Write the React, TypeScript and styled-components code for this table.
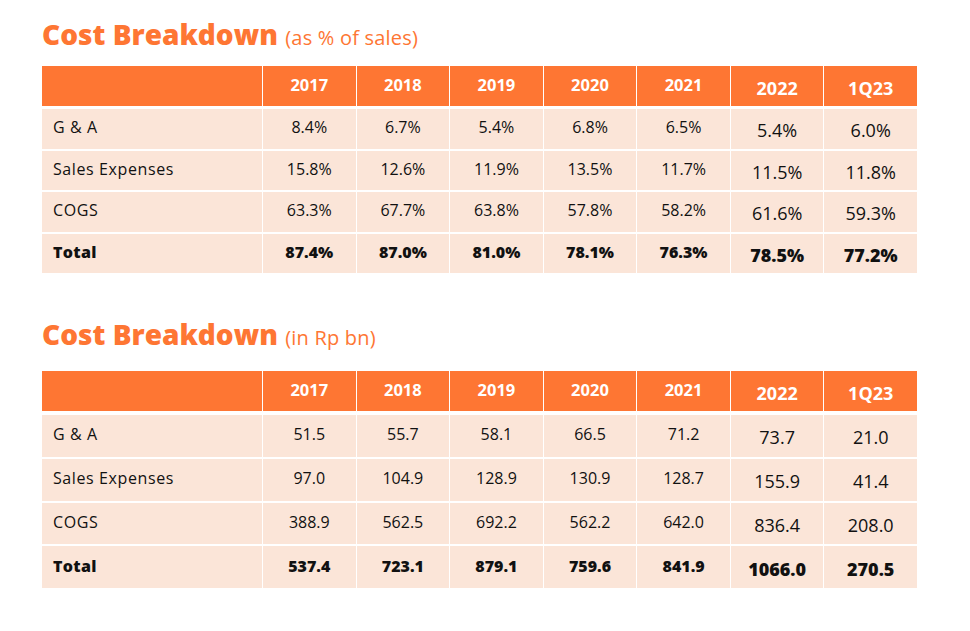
import React from "react";
import styled, { createGlobalStyle } from "styled-components";

const GlobalStyle = createGlobalStyle`
  body {
    margin: 0;
    background: #ffffff;
    font-family: "Open Sans", "Liberation Sans", sans-serif;
  }
`;

const years = ["2017", "2018", "2019", "2020", "2021", "2022", "1Q23"];

// 마지막 두 열(2022, 1Q23)은 원본에서 글자가 조금 더 큼
const bigCols = [5, 6];

const percentRows = [
  { label: "G & A", values: ["8.4%", "6.7%", "5.4%", "6.8%", "6.5%", "5.4%", "6.0%"] },
  { label: "Sales Expenses", values: ["15.8%", "12.6%", "11.9%", "13.5%", "11.7%", "11.5%", "11.8%"] },
  { label: "COGS", values: ["63.3%", "67.7%", "63.8%", "57.8%", "58.2%", "61.6%", "59.3%"] },
  { label: "Total", values: ["87.4%", "87.0%", "81.0%", "78.1%", "76.3%", "78.5%", "77.2%"], total: true },
];

const amountRows = [
  { label: "G & A", values: ["51.5", "55.7", "58.1", "66.5", "71.2", "73.7", "21.0"] },
  { label: "Sales Expenses", values: ["97.0", "104.9", "128.9", "130.9", "128.7", "155.9", "41.4"] },
  { label: "COGS", values: ["388.9", "562.5", "692.2", "562.2", "642.0", "836.4", "208.0"] },
  { label: "Total", values: ["537.4", "723.1", "879.1", "759.6", "841.9", "1066.0", "270.5"], total: true },
];

type Row = { label: string; values: string[]; total?: boolean };

const CostTable = ({
  title,
  unit,
  rows,
  rowHeight,
  headGap,
  titleGap,
}: {
  title: string;
  unit: string;
  rows: Row[];
  rowHeight: number;
  headGap: number;
  titleGap: number;
}) => (
  <Section $gap={titleGap}>
    <Title>
      {title} <Unit>{unit}</Unit>
    </Title>
    <Grid>
      <HeadRow $gap={headGap}>
        <HeadCell />
        {years.map((y, i) => (
          <HeadCell key={y} $big={bigCols.includes(i)}>
            {y}
          </HeadCell>
        ))}
      </HeadRow>
      {rows.map((r) => (
        <BodyRow key={r.label} $h={rowHeight}>
          <LabelCell $bold={r.total}>{r.label}</LabelCell>
          {r.values.map((v, i) => (
            <ValueCell key={i} $bold={r.total} $big={bigCols.includes(i)}>
              {v}
            </ValueCell>
          ))}
        </BodyRow>
      ))}
    </Grid>
  </Section>
);

export default function App() {
  return (
    <>
      <GlobalStyle />
      <Page>
        <CostTable
          title="Cost Breakdown"
          unit="(as % of sales)"
          rows={percentRows}
          rowHeight={39.5}
          headGap={3}
          titleGap={9}
        />
        <CostTable
          title="Cost Breakdown"
          unit="(in Rp bn)"
          rows={amountRows}
          rowHeight={41.75}
          headGap={4}
          titleGap={14}
        />
      </Page>
    </>
  );
}

const Page = styled.div`
  width: 970px;
  height: 631px;
  padding: 15px 53px 0 42px;
  box-sizing: border-box;
  display: flex;
  flex-direction: column;
  gap: 42px;
`;

const Section = styled.section<{ $gap: number }>`
  display: flex;
  flex-direction: column;
  gap: ${(p) => p.$gap}px;
`;

const Title = styled.h2`
  margin: 0;
  color: #fe7633;
  font-family: "Open Sans", sans-serif;
  font-size: 28px;
  font-weight: 800;
  letter-spacing: 0;
  line-height: 38px;
  white-space: nowrap;
`;

const Unit = styled.span`
  font-size: 20px;
  font-weight: 400;
  letter-spacing: 0.2px;
`;

const Grid = styled.div`
  display: flex;
  flex-direction: column;
  gap: 2px;
`;

const RowBase = styled.div`
  display: grid;
  grid-template-columns: 220px repeat(7, 1fr);
  column-gap: 1px;
`;

const HeadRow = styled(RowBase)<{ $gap: number }>`
  height: 40px;
  margin-bottom: ${(p) => p.$gap - 2}px;
`;

const BodyRow = styled(RowBase)<{ $h: number }>`
  height: ${(p) => p.$h}px;
`;

const HeadCell = styled.div<{ $big?: boolean }>`
  background: #fe7633;
  color: #ffffff;
  font-weight: 700;
  font-size: ${(p) => (p.$big ? 18 : 16.5)}px;
  display: flex;
  align-items: center;
  justify-content: center;
  padding-top: ${(p) => (p.$big ? 3 : 0)}px;
  padding-bottom: ${(p) => (p.$big ? 0 : 3)}px;
`;

const LabelCell = styled.div<{ $bold?: boolean }>`
  background: #fbe5d8;
  color: #111111;
  font-size: 16px;
  letter-spacing: ${(p) => (p.$bold ? 0.3 : 0.6)}px;
  font-weight: ${(p) => (p.$bold ? 800 : 400)};
  display: flex;
  align-items: center;
  padding: 0 0 3px 11px;
`;

const ValueCell = styled.div<{ $bold?: boolean; $big?: boolean }>`
  background: #fbe5d8;
  color: #111111;
  font-size: ${(p) => (p.$big ? 18 : 16)}px;
  font-weight: ${(p) => (p.$bold ? 800 : 400)};
  display: flex;
  align-items: center;
  justify-content: center;
  padding-top: ${(p) => (p.$big ? 3 : 0)}px;
  padding-bottom: ${(p) => (p.$big ? 0 : 3)}px;
`;
